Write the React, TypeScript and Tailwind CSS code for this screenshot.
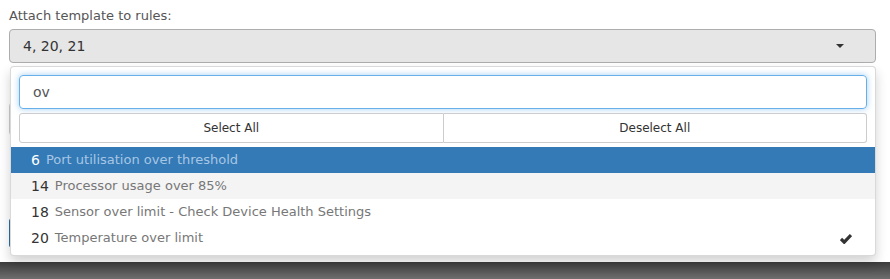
import React from 'react';

const items = [
  { id: 6, text: 'Port utilisation over threshold', state: 'active' },
  { id: 14, text: 'Processor usage over 85%', state: 'hover' },
  { id: 18, text: 'Sensor over limit - Check Device Health Settings', state: '' },
  { id: 20, text: 'Temperature over limit', state: 'checked' },
];

function RuleMenu() {
  return (
    <div className="absolute left-[1px] top-[37px] w-[866px] bg-white border border-black/15 rounded-[4px] shadow-[0_6px_12px_rgba(0,0,0,0.18)] pt-[8px] pb-[4px] z-10">
      <div className="px-[8px] flex flex-col gap-[4px]">
        <div className="h-[34px] border border-[#66afe9] rounded-[4px] shadow-[0_0_6px_rgba(102,175,233,0.6)] flex items-center px-[13px] text-[14px] text-[#555]">ov</div>
        <div className="flex h-[30px]">
          <button className="flex-1 border border-[#ccc] rounded-l-[3px] text-[12px] text-[#333] bg-white">Select All</button>
          <button className="flex-1 border border-l-0 border-[#ccc] rounded-r-[3px] text-[12px] text-[#333] bg-white">Deselect All</button>
        </div>
      </div>
      <ul className="mt-[4px]">
        {items.map(it => (
          <li
            key={it.id}
            className={`h-[26px] flex items-center gap-[6px] pl-[20px] pr-[23px] ${it.state === 'active' ? 'bg-[#337ab7]' : it.state === 'hover' ? 'bg-[#f4f4f4]' : 'bg-white'}`}
          >
            <span className={`text-[14px] ${it.state === 'active' ? 'text-white' : 'text-[#333]'}`}>{it.id}</span>
            <span className={`text-[13px] ${it.state === 'active' ? 'text-[#a8c6e3]' : 'text-[#777]'}`}>{it.text}</span>
            {it.state === 'checked' && (
              <svg className="ml-auto" width="12" height="11" viewBox="0 0 12 11">
                <path d="M1 6 L4.2 9.2 L11 2" fill="none" stroke="#333" strokeWidth="3.2" />
              </svg>
            )}
          </li>
        ))}
      </ul>
    </div>
  );
}

export default function App() {
  return (
    <div className="w-[890px] h-[279px] bg-white flex flex-col overflow-hidden font-['DejaVu_Sans',Verdana,sans-serif]">
      <div className="px-[9px] pt-[7px] flex-1">
        <label className="block text-[13px] leading-[17px] text-[#555] mb-[5px]">Attach template to rules:</label>
        <div className="relative w-[867px]">
          <button className="w-full h-[34px] flex items-center justify-between pl-[13px] pr-[31px] bg-[#e6e6e6] border border-[#adadad] rounded-[4px] text-[14px] text-[#333]">
            <span>4, 20, 21</span>
            <span className="w-0 h-0 border-l-[4px] border-r-[4px] border-t-[4px] border-l-transparent border-r-transparent border-t-[#333]" />
          </button>
          <RuleMenu />
        </div>

        {/* rest of the form, hidden under the open menu; only its left edges peek out */}
        <div className="mt-[39px] w-[867px] h-[34px] border border-[#ccc] rounded-[4px]" aria-hidden="true" />
        <div className="mt-[82px] w-[60px] h-[30px] bg-[#337ab7] border border-[#2e6da4] rounded-[3px]" aria-hidden="true" />
      </div>
      <div className="h-[17px] bg-gradient-to-b from-[#3c3c3c] to-[#6e6e6e]" />
    </div>
  );
}
